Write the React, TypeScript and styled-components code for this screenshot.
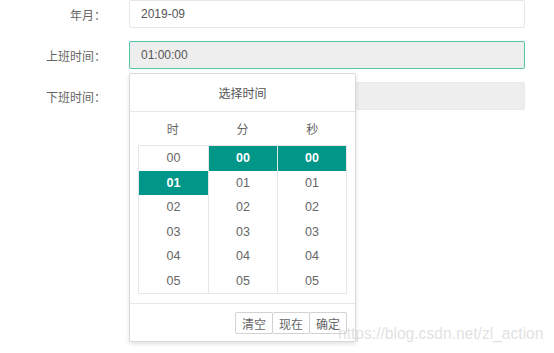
import React, {useState} from 'react';
import styled, {createGlobalStyle} from "styled-components";

const GlobalStyle = createGlobalStyle`
    html, body {
        margin: 0;
        padding: 0;
        background: #fff;
    }
    body {
        font-family: "Liberation Sans", "Noto Sans CJK SC", sans-serif;
        font-size: 12px;
        color: #666;
    }
`;

const TEAL = '#009688';

const hours = ['00', '01', '02', '03', '04', '05'];

type Column = {
    title: string;
    selected: string;
}

const columns: Column[] = [
    {title: '时', selected: '01'},
    {title: '分', selected: '00'},
    {title: '秒', selected: '00'},
];

export default function App() {
    const [value] = useState('01:00:00');

    return (
        <Page>
            <GlobalStyle/>
            <Form>
                <FormRow>
                    <Label>年月：</Label>
                    <InputBox>2019-09</InputBox>
                </FormRow>

                <FormRow>
                    <Label>上班时间：</Label>
                    <InputWrap>
                        <InputBox $focused $disabled>{value}</InputBox>

                        <Picker>
                            <PickerHeader>选择时间</PickerHeader>

                            <PickerBody>
                                <ColTitles>
                                    {columns.map((c) => (
                                        <ColTitle key={c.title}>{c.title}</ColTitle>
                                    ))}
                                </ColTitles>

                                <Lists>
                                    {columns.map((c) => (
                                        <List key={c.title}>
                                            {hours.map((h) => (
                                                <Item key={h} $active={h === c.selected}>{h}</Item>
                                            ))}
                                        </List>
                                    ))}
                                </Lists>
                            </PickerBody>

                            <PickerFooter>
                                <BtnGroup>
                                    <Btn>清空</Btn>
                                    <Btn>现在</Btn>
                                    <Btn>确定</Btn>
                                </BtnGroup>
                            </PickerFooter>
                        </Picker>
                    </InputWrap>
                </FormRow>

                <FormRow>
                    <Label>下班时间：</Label>
                    <InputBox $disabled/>
                </FormRow>
            </Form>

            <Watermark>https://blog.csdn.net/zl_action</Watermark>
        </Page>
    );
}

const Page = styled.div`
    position: relative;
    width: 554px;
    height: 353px;
    overflow: hidden;
    background: #fff;
`;

const Form = styled.div`
    display: flex;
    flex-direction: column;
    gap: 13px;
`;

const FormRow = styled.div`
    display: flex;
    align-items: center;
    gap: 23px;
    height: 28px;
`;

const Label = styled.div`
    width: 106px;
    text-align: right;
    font-size: 12px;
    color: #666;
`;

const InputWrap = styled.div`
    position: relative;
    width: 396px;
    height: 28px;
`;

const InputBox = styled.div<{ $focused?: boolean; $disabled?: boolean }>`
    box-sizing: border-box;
    width: 396px;
    height: 28px;
    padding-left: 11px;
    display: flex;
    align-items: center;
    font-size: 12px;
    color: #555;
    background: ${p => p.$disabled ? '#eee' : '#fff'};
    border: 1px solid ${p => p.$focused ? '#52c6a7' : p.$disabled ? '#eaeaea' : '#e6e6e6'};
    border-radius: 2px;
`;

const Picker = styled.div`
    position: absolute;
    left: 0;
    top: 32px;
    z-index: 10;
    box-sizing: border-box;
    width: 227px;
    height: 269px;
    display: flex;
    flex-direction: column;
    background: #fff;
    border: 1px solid #d9d9d9;
    border-radius: 2px;
    box-shadow: 0 2px 4px rgba(0, 0, 0, 0.12);
`;

const PickerHeader = styled.div`
    height: 37px;
    display: flex;
    align-items: center;
    justify-content: center;
    border-bottom: 1px solid #e6e6e6;
    font-size: 12px;
    color: #555;
`;

const PickerBody = styled.div`
    padding: 0 8px;
`;

const ColTitles = styled.div`
    display: grid;
    grid-template-columns: repeat(3, 1fr);
    height: 33px;
`;

const ColTitle = styled.div`
    display: flex;
    align-items: center;
    justify-content: center;
    font-size: 12px;
    color: #666;
`;

const Lists = styled.div`
    display: grid;
    grid-template-columns: repeat(3, 1fr);
    border: 1px solid #e6e6e6;
`;

const List = styled.div`
    display: flex;
    flex-direction: column;

    & + & {
        border-left: 1px solid #e6e6e6;
    }
`;

const Item = styled.div<{ $active?: boolean }>`
    height: 24.5px;
    display: flex;
    align-items: center;
    justify-content: center;
    font-size: 12.5px;
    color: ${p => p.$active ? '#fff' : '#666'};
    background: ${p => p.$active ? TEAL : 'transparent'};
    font-weight: ${p => p.$active ? 700 : 400};
`;

const PickerFooter = styled.div`
    margin-top: auto;
    border-top: 1px solid #e6e6e6;
    padding: 8px 8px 7px;
    display: flex;
    justify-content: flex-end;
`;

const BtnGroup = styled.div`
    display: flex;
`;

const Btn = styled.button`
    box-sizing: border-box;
    width: 38px;
    height: 22px;
    padding: 0;
    font-family: "Liberation Sans", "Noto Sans CJK SC", sans-serif;
    font-size: 12px;
    color: #666;
    background: #fff;
    border: 1px solid #d2d2d2;
    border-radius: 2px;

    & + & {
        margin-left: -1px;
    }
`;

const Watermark = styled.div`
    position: absolute;
    left: 338px;
    top: 325px;
    z-index: 20;
    font-size: 15.6px;
    color: rgba(205, 205, 205, 0.6);
    white-space: nowrap;
    pointer-events: none;
`;
